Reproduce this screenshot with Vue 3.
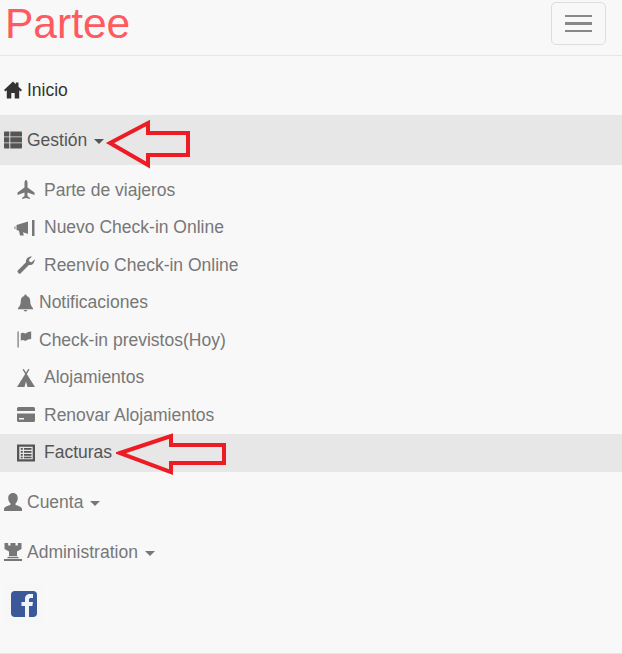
<template>
  <div class="page">
    <header class="top">
      <a class="brand">Partee</a>
      <button class="toggle">
        <span></span>
        <span></span>
        <span></span>
      </button>
    </header>

    <nav class="nav">
      <a class="item home">
        <svg class="icon" viewBox="0 0 18 18"><path :d="icons.home" /></svg>
        Inicio
      </a>

      <a class="item open">
        <svg class="icon" viewBox="0 0 18 18"><path :d="icons.list" /></svg>
        Gestión
        <b class="caret"></b>
        <svg class="arrow arrow-one" width="90" height="54" viewBox="0 0 90 54">
          <path d="M5 26 L43 6 V16 H83 V38 H43 V48 Z" />
        </svg>
      </a>

      <ul class="sub">
        <li v-for="entry in entries" :key="entry.label" :class="{ active: entry.active }">
          <svg class="icon" :class="{ narrow: entry.narrow }" viewBox="0 0 18 18"><path :d="icons[entry.icon]" /></svg>
          {{ entry.label }}
          <svg v-if="entry.active" class="arrow arrow-two" width="112" height="48" viewBox="0 0 112 48">
            <path d="M4 20 L55 3 V12 H108 V30 H55 V39 Z" />
          </svg>
        </li>
      </ul>

      <a class="item">
        <svg class="icon" viewBox="0 0 18 18"><path :d="icons.user" /></svg>
        Cuenta
        <b class="caret"></b>
      </a>
      <a class="item">
        <svg class="icon" viewBox="0 0 18 18"><path :d="icons.tower" /></svg>
        Administration
        <b class="caret"></b>
      </a>

      <div class="social">
        <svg width="26" height="26" viewBox="0 0 26 26">
          <rect width="26" height="26" rx="4" fill="#3b5998" />
          <path fill="#f1f3f8" d="M14 26V15h-3.500v-4H14V8c0-3.500 2-5 5-5h3v4h-2c-1.500 0-2 .6-2 2v2h4l-.6 4H18v11Z" />
        </svg>
      </div>
    </nav>
  </div>
</template>

<script setup>
const icons = {
  home: 'M9 .5 0 9l1.300 1.500 1.500-1.300v8.300h4.500V12h3.400v5.500h4.500V9.200l1.500 1.300L18 9l-3.500-3.300V1.500h-2.700v1.700Z',
  list: 'M1 .5h4.300v5H0V1.500Q0 .5 1 .5ZM6.300.5H17q1 0 1 1v4H6.300ZM0 6.300h5.300v5.200H0ZM6.300 6.300H18v5.200H6.300ZM0 12.300h5.300v5.200H1q-1 0-1-1ZM6.300 12.300H18v4.200q0 1-1 1H6.300Z',
  plane: 'M9 -1C8 -1 7.500 .5 7.500 2v4.500L.5 11.500v2.500l7-2.500V15L5 17v1l4-1 4 1v-1l-2.500-2v-3.500l7 2.500v-2.500l-7-5V2C10.500 .5 10 -1 9 -1Z',
  bullhorn: 'M-2.500 7.500h1v2.500h-1ZM-.5 6 11 2.500v12.500l-5-1.800.8 3.300H3L2 11.800l-2.500-.8ZM15 1h2.500v16H15Z',
  wrench: 'M.5 14.800 9 6.300C8.500 3 11.200.2 15 .5l-3 3 .5 2.200 2.200.5 3-3c.2 3.800-2.700 6.400-5.800 5.800l-8.400 8.500c-1.200 1-3.400-1.200-3-2.700Z',
  bell: 'M9 0c1 0 1.300.7 1.300 1.500 2.500.7 3.700 2.700 3.700 5.500 0 3.500 1 5.500 3 7.500v1H1v-1c2-2 3-4 3-7.500 0-2.800 1.200-4.800 3.700-5.500C7.700.7 8 0 9 0ZM7 16.500h4c0 1-1 1.500-2 1.500s-2-.5-2-1.500Z',
  flag: 'M.5 0h1.300v17H.5ZM4 2c1-.5 2-1 3-.5s2 .8 3 .2 2-1.700 5-1.700v8c-3 0-4 1-5 1.500s-2 .3-3-.2-2 0-3 .5Z',
  tent: 'M5.500.5 6.700 0 9 3.500 11.300 0l1.200.5-2.700 4.500L18 18h-7.500L9 12.500 7.500 18H0L8.200 5Z',
  card: 'M1.500 1h15q1.500 0 1.500 1.500V5H0V2.500Q0 1 1.500 1ZM0 7.500h18V14.500q0 1.500-1.500 1.500h-15Q0 16 0 14.500ZM2 12v1.500h5V12Z',
  listAlt: 'M0 .5h18v17H0ZM2.300 2.800v12.400h13.400V2.800ZM3.800 4h2v1.800h-2ZM7 4h7.500v1.800H7ZM3.800 7h2v1.800h-2ZM7 7h7.500v1.800H7ZM3.800 10h2v1.800h-2ZM7 10h7.500v1.800H7ZM3.800 12.800h2v1.500h-2ZM7 12.800h7.500v1.500H7Z',
  user: 'M9 0c3.200 0 4.800 2.400 4.800 5.300 0 2.200-1 4-2.300 5.100v1.300c2.500 1.200 6.500 2 6.500 4.300v2H0v-2c0-2.300 4-3.100 6.500-4.300v-1.300C5.200 9.300 4.200 7.500 4.200 5.300 4.200 2.400 5.800 0 9 0Z',
  tower: 'M.5 0h3.700v2.500h2.300V0h5v2.500h2.300V0h3.700v6l-4.500 2.500v4.500H5V8.500L.5 6ZM4 13.800h10l1 1.500H3ZM0 16h18v2H0Z',
}

const entries = [
  { label: 'Parte de viajeros', icon: 'plane' },
  { label: 'Nuevo Check-in Online', icon: 'bullhorn' },
  { label: 'Reenvío Check-in Online', icon: 'wrench' },
  { label: 'Notificaciones', icon: 'bell', narrow: true },
  { label: 'Check-in previstos(Hoy)', icon: 'flag', narrow: true },
  { label: 'Alojamientos', icon: 'tent' },
  { label: 'Renovar Alojamientos', icon: 'card' },
  { label: 'Facturas', icon: 'listAlt', active: true },
]
</script>

<style>
html,
body {
  margin: 0;
  background: #f8f8f8;
}
</style>

<style scoped>
.page {
  height: 654px;
  box-sizing: border-box;
  background: #f8f8f8;
  border-bottom: 1px solid #e7e7e7;
  font-family: "Liberation Sans", Arial, sans-serif;
  font-size: 17.500px;
  color: #777;
  overflow: hidden;
}

.top {
  height: 56px;
  box-sizing: border-box;
  display: flex;
  justify-content: space-between;
  padding: 2px 16px 0 5px;
  border-bottom: 1px solid #e7e7e7;
}

.brand {
  font-size: 42.500px;
  line-height: 44px;
  color: #ff5a5f;
}

.toggle {
  width: 55px;
  height: 43px;
  box-sizing: border-box;
  display: flex;
  flex-direction: column;
  align-items: center;
  justify-content: center;
  gap: 5px;
  padding: 0;
  background: transparent;
  border: 1px solid #ddd;
  border-radius: 5px;
}

.toggle span {
  width: 27px;
  height: 2.500px;
  background: #888;
}

.nav {
  padding-top: 9px;
}

.item {
  position: relative;
  display: flex;
  align-items: center;
  height: 50px;
  padding-left: 4px;
}

.item .icon {
  width: 18px;
  height: 18px;
  margin-right: 5px;
  flex: none;
}

.home {
  color: #333;
}

.open {
  background: #e7e7e7;
  color: #555;
}

.caret {
  width: 0;
  height: 0;
  margin-left: 7px;
  margin-top: 2px;
  border-top: 5px solid currentColor;
  border-left: 5px solid transparent;
  border-right: 5px solid transparent;
}

.icon {
  fill: currentColor;
  overflow: visible;
}

.sub {
  list-style: none;
  margin: 0;
  padding: 6.500px 0 5.500px;
}

.sub li {
  position: relative;
  display: flex;
  align-items: center;
  height: 37.500px;
  padding-left: 17px;
}

.sub .icon {
  width: 18px;
  height: 18px;
  flex: none;
  margin-right: 9px;
}

.sub .icon.narrow {
  width: 17px;
  margin-right: 5px;
}

.sub .active {
  background: #e7e7e7;
  color: #555;
}

.arrow {
  position: absolute;
}

.arrow path {
  fill: none;
  stroke: #ed1c24;
  stroke-width: 4;
}

.arrow-one {
  left: 105px;
  top: 2px;
}

.arrow-two {
  left: 116px;
  top: -1px;
}

.social {
  width: 40px;
  box-sizing: border-box;
  margin: 7px 0 0 4px;
  padding: 7px;
  background: #f7f7f7;
}

.social svg {
  display: block;
}
</style>
